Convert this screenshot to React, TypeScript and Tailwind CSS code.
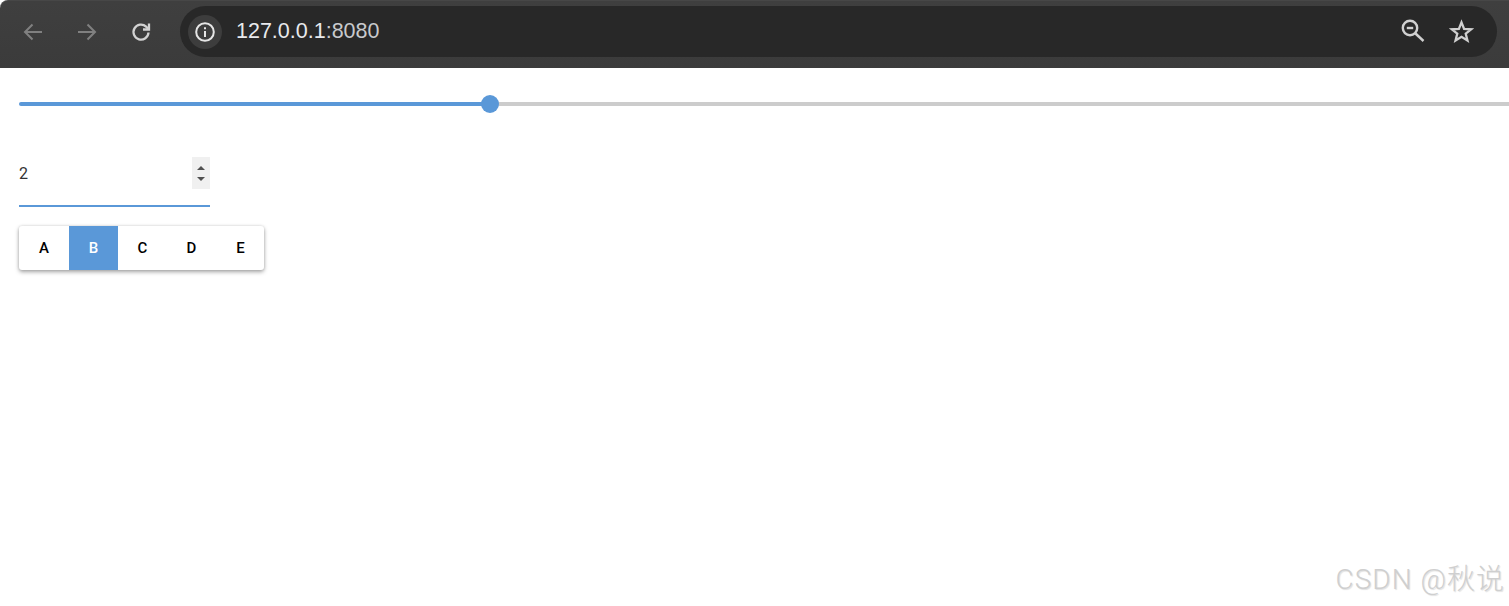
import React from "react";

function IconBack({ cls }: { cls: string }) {
  return (
    <svg width="24" height="24" viewBox="0 0 24 24" className={cls} fill="none" stroke="currentColor" strokeWidth="2">
      <path d="M21 12H4M11.5 4.5 4 12l7.5 7.5" />
    </svg>
  );
}

function IconForward({ cls }: { cls: string }) {
  return (
    <svg width="24" height="24" viewBox="0 0 24 24" className={cls} fill="none" stroke="currentColor" strokeWidth="2">
      <path d="M3 12h17M12.5 4.5 20 12l-7.5 7.5" />
    </svg>
  );
}

export default function App() {
  const letters = ["A", "B", "C", "D", "E"];
  return (
    <div className="relative h-[606px] w-full overflow-hidden bg-white font-['Roboto',sans-serif]">
      {/* browser toolbar */}
      <div className="flex h-[68px] items-start rounded-tl-lg bg-gradient-to-b from-[#3f3f3f] to-[#3b3b3b] border-t border-[#474747] pl-[21px] pr-3 pt-[5px]">
        <div className="flex h-[51px] items-center text-[#808080]">
          <IconBack cls="" />
          <IconForward cls="ml-[30px]" />
          <svg width="24" height="24" viewBox="0 0 24 24" className="ml-[30px] text-[#d2d2d2]" fill="none" stroke="currentColor" strokeWidth="2.3">
            <path d="M19.5 12.5a7.5 7.5 0 1 1-2.4-5.9L19.5 9" />
            <path d="M20 3.5V9.5H14" />
          </svg>
        </div>
        <div className="ml-[27px] flex h-[51px] flex-1 items-center rounded-full bg-[#282828] pl-2 pr-[23px]">
          <div className="flex h-[34px] w-[34px] items-center justify-center rounded-full bg-[#3d3d3d]">
            <svg width="22" height="22" viewBox="0 0 22 22" className="text-[#e6e6e6]" fill="none" stroke="currentColor" strokeWidth="2">
              <circle cx="11" cy="11" r="8.8" />
              <path d="M11 10v6" />
              <path d="M11 6.2v2" />
            </svg>
          </div>
          <div className="ml-[14px] font-['Liberation_Sans',sans-serif] text-[21.5px] leading-none text-[#e8eaed]">
            127.0.0.1<span className="text-[#c8cacd]">:8080</span>
          </div>
          <div className="ml-auto flex items-center gap-[23px] text-[#d0d0d0]">
            <svg width="26" height="26" viewBox="0 0 26 26" className="-mt-px" fill="none" stroke="currentColor" strokeWidth="2.4">
              <circle cx="10" cy="10" r="7.2" />
              <path d="M6.8 10h6.4" />
              <path d="m15.5 15.5 8 7.5" />
            </svg>
            <svg width="25" height="25" viewBox="0 0 26 26" fill="none" stroke="currentColor" strokeWidth="2.4" strokeLinejoin="miter">
              <path d="M13 3.5l2.7 6.7 7.3.5-5.6 4.6 1.8 7.1L13 18.6l-6.2 3.8 1.8-7.1L3 10.7l7.3-.5z" />
            </svg>
          </div>
        </div>
      </div>

      {/* content */}
      <div className="flex flex-col items-start pl-[19px]">
        {/* slider */}
        <div className="mt-[27px] flex h-[18px] w-[calc(100%+19px)] shrink-0 items-center">
          <div className="h-1 w-[465px] rounded-l-full bg-[#5a98d8]" />
          <div className="z-10 -mx-[3px] h-[18px] w-[18px] shrink-0 rounded-full bg-[#5a98d8]" />
          <div className="h-1 flex-1 bg-[#cccccc]" />
        </div>

        {/* number input */}
        <div className="mt-[44px] flex h-[50px] w-[191px] items-start justify-between border-b-2 border-[#5a98d8]">
          <span className="mt-2 text-base leading-[18px] text-[#333333]">2</span>
          <div className="flex h-8 w-[18px] flex-col items-center justify-center gap-[7px] bg-[#f0f0f0]">
            <div className="h-0 w-0 border-x-[4.5px] border-b-[4.5px] border-x-transparent border-b-[#505050]" />
            <div className="h-0 w-0 border-x-[4.5px] border-t-[4.5px] border-x-transparent border-t-[#505050]" />
          </div>
        </div>

        {/* button group */}
        <div className="mt-[19px] flex h-11 w-[245px] overflow-hidden rounded-[3px] bg-white shadow-[0_2px_4px_rgba(0,0,0,0.35),0_0_3px_rgba(0,0,0,0.12)]">
          {letters.map((l, i) => (
            <div
              key={l}
              className={
                l === "B"
                  ? "flex h-full w-[49px] shrink-0 items-center justify-center bg-[#5a98d8] text-[15px] font-medium text-white"
                  : i === 0
                    ? "flex h-full w-[50px] shrink-0 items-center justify-center text-[15px] font-medium text-black"
                    : "flex h-full w-[49px] shrink-0 items-center justify-center text-[15px] font-medium text-black"
              }
            >
              {l}
            </div>
          ))}
        </div>
      </div>

      {/* watermark */}
      <div className="absolute bottom-[9px] right-[4px] font-['Roboto','Noto_Sans_CJK_SC',sans-serif] text-[28px] font-light leading-[34px] tracking-[1px] text-[#cfcfcf] [text-shadow:1px_1px_1px_rgba(0,0,0,0.12)]">
        CSDN @秋说
      </div>
    </div>
  );
}
